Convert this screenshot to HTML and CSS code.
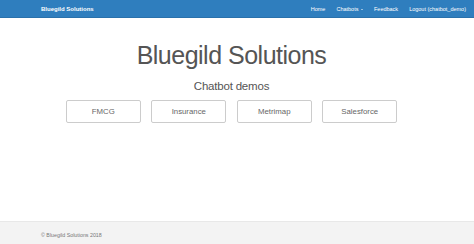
FILE: index.html
```html
<!DOCTYPE html>
<html>
<head>
<meta charset="utf-8">
<link rel="stylesheet" href="styles.css">
</head>
<body>
<nav class="navbar">
  <div class="brand">Bluegild Solutions</div>
  <ul class="nav">
    <li>Home</li>
    <li>Chatbots <span class="caret"></span></li>
    <li>Feedback</li>
    <li>Logout (chatbot_demo)</li>
  </ul>
</nav>
<main class="main">
  <h1 class="title">Bluegild Solutions</h1>
  <h2 class="subtitle">Chatbot demos</h2>
  <div class="buttons">
    <div class="btn">FMCG</div>
    <div class="btn">Insurance</div>
    <div class="btn">Metrimap</div>
    <div class="btn">Salesforce</div>
  </div>
</main>
<footer class="footer">
  <p class="copy">© Bluegild Solutions 2018</p>
</footer>
</body>
</html>
```

FILE: styles.css
```css
html, body {
  margin: 0;
  padding: 0;
  height: 100%;
}
body {
  font-family: "Liberation Sans", Arial, sans-serif;
  background: #fff;
  display: flex;
  flex-direction: column;
  color: #555;
}
.navbar {
  height: 17px;
  background: #2f7ebe;
  border-bottom: 1px solid #2a71ab;
  display: flex;
  align-items: center;
  justify-content: space-between;
  padding: 0 8px 0 41px;
  color: #fff;
  flex-shrink: 0;
}
.brand {
  font-size: 6px;
  font-weight: bold;
}
.nav {
  list-style: none;
  display: flex;
  gap: 11px;
  margin: 0;
  padding: 0;
  font-size: 5.5px;
}
.caret {
  display: inline-block;
  width: 0;
  height: 0;
  border-left: 1.5px solid transparent;
  border-right: 1.5px solid transparent;
  border-top: 1.5px solid #fff;
  vertical-align: middle;
  margin-left: 1px;
}
.main {
  flex: 1;
  display: flex;
  flex-direction: column;
  align-items: center;
  padding-right: 11px;
}
.title {
  font-size: 25px;
  font-weight: normal;
  letter-spacing: -0.5px;
  color: #555;
  margin: 22px 0 0;
  line-height: 30px;
}
.subtitle {
  font-size: 11.5px;
  font-weight: normal;
  letter-spacing: -0.2px;
  color: #555;
  margin: 9px 0 0;
  line-height: 14px;
}
.buttons {
  display: flex;
  gap: 10.5px;
  margin-top: 7px;
}
.btn {
  width: 73px;
  height: 21px;
  border: 1px solid #ccc;
  border-radius: 2px;
  display: flex;
  align-items: center;
  justify-content: center;
  font-size: 7.8px;
  color: #666;
}
.footer {
  height: 22px;
  background: #f3f3f3;
  border-top: 1px solid #e8e8e8;
  display: flex;
  align-items: center;
  padding-left: 41px;
  flex-shrink: 0;
}
.copy {
  margin: 3px 0 0;
  font-size: 5.3px;
  color: #777;
}
```
